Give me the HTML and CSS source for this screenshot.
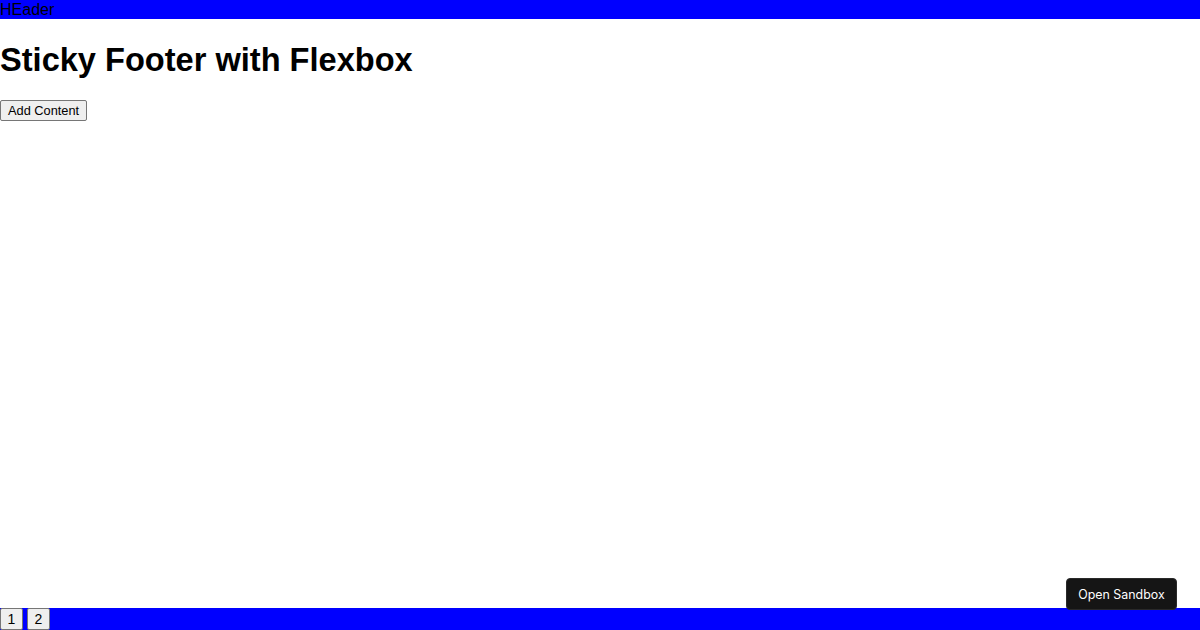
FILE: index.html
```html
<!DOCTYPE html>
<html>
<head>
<meta charset="utf-8">
<link rel="stylesheet" href="styles.css">
</head>
<body>
<div class="page">
  <header class="header">HEader</header>
  <main class="main">
    <h1 class="title">Sticky Footer with Flexbox</h1>
    <button class="btn">Add Content</button>
  </main>
  <footer class="footer">
    <button class="btn btn-page">1</button>
    <button class="btn btn-page">2</button>
  </footer>
</div>
<a class="sandbox">Open Sandbox</a>
</body>
</html>
```
FILE: styles.css
```css
html, body {
  margin: 0;
  height: 100%;
}
body {
  font-family: "Liberation Sans", Arial, sans-serif;
  font-size: 16px;
  color: #000;
  background: #fff;
}
.page {
  display: flex;
  flex-direction: column;
  min-height: 100vh;
}
.header {
  background: #0000ff;
  height: 19px;
  line-height: 19px;
}
.main {
  flex: 1;
}
.title {
  font-size: 32.6px;
  font-weight: bold;
  margin: 22px 0 22px;
  line-height: 37px;
}
.btn {
  font-family: "Liberation Sans", Arial, sans-serif;
  font-size: 12.8px;
  color: #000;
  background: #efefef;
  border: 1px solid #767676;
  border-radius: 2px;
  padding: 1px 7px;
  height: 21px;
  line-height: 15px;
  margin: 0;
}
.footer {
  background: #0000ff;
  height: 22px;
  display: flex;
  gap: 4px;
  align-items: flex-end;
}
.btn-page {
  height: 22px;
  width: 23px;
  padding: 1px 0;
  font-size: 14px;
  text-align: center;
}
.sandbox {
  position: fixed;
  right: 23px;
  bottom: 20px;
  width: 111px;
  height: 32px;
  box-sizing: border-box;
  background: #151515;
  color: #fff;
  border: 1px solid #2a2a2a;
  border-radius: 4px;
  font-family: Inter, "Liberation Sans", sans-serif;
  font-size: 12.4px;
  display: flex;
  align-items: center;
  justify-content: center;
}
```
